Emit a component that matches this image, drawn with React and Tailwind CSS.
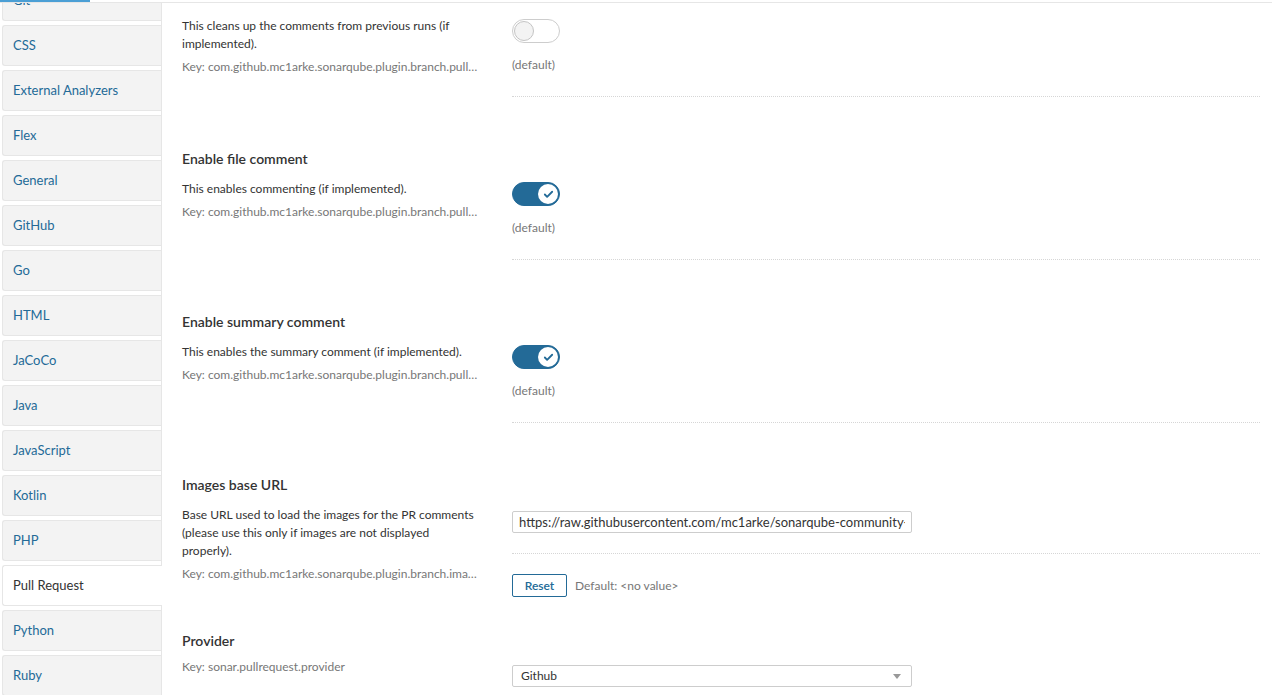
import { Check } from 'lucide-react'

const categories = [
  'Git', 'CSS', 'External Analyzers', 'Flex', 'General', 'GitHub', 'Go', 'HTML',
  'JaCoCo', 'Java', 'JavaScript', 'Kotlin', 'PHP', 'Pull Request', 'Python', 'Ruby',
]

const Toggle = ({ on }) => (
  on ? (
    <div className="w-[48px] h-[24px] rounded-full bg-[#236a97] border border-[#236a97] flex items-center justify-end pr-[1px]">
      <div className="w-[20px] h-[20px] rounded-full bg-white flex items-center justify-center">
        <Check size={11} strokeWidth={4} className="text-[#236a97]" />
      </div>
    </div>
  ) : (
    <div className="w-[48px] h-[24px] rounded-full bg-white border border-[#cdcdcd] flex items-center pl-[1px]">
      <div className="w-[20px] h-[20px] rounded-full bg-[#f3f3f3] border border-[#c4c4c4]" />
    </div>
  )
)

const Section = ({ title, description, settingKey, children, actions, keyTight, spaced }) => (
  <div className={spaced ? "pb-[34px]" : "pb-[32px]"}>
    <h3 className="text-[14px] leading-5 font-semibold text-[#333] mb-[11px]">{title}</h3>
    <div className="flex">
      <div className="w-[297px] flex-none">
        {description && <div className="text-[12px] leading-[18px] text-[#333]">{description}</div>}
        <div className={keyTight ? "text-[12px] leading-[18px] text-[#777] truncate -mt-[4px]" : "text-[12px] leading-[18px] text-[#777] truncate mt-[5px]"}>
          Key: {settingKey}
        </div>
      </div>
      <div className="ml-[33px] flex-1 pt-[2px]">
        {children}
        {actions !== undefined && (
          <div className="border-t border-dotted border-[#d6d6d6] pt-[20px]">{actions}</div>
        )}
      </div>
    </div>
  </div>
)

const ToggleSetting = ({ on }) => (
  <div className="pb-[22px]">
    <Toggle on={on} />
    <div className="mt-[13px] text-[12px] leading-[18px] text-[#777]">(default)</div>
  </div>
)

export default function App() {
  return (
    <div className="h-[695px] overflow-hidden bg-white flex relative" style={{ fontFamily: 'Lato, "Open Sans", sans-serif' }}>
      <div className="fixed top-0 left-0 right-0 h-[3px] bg-white border-b border-[#e6e6e6] z-20">
        <div className="w-[90px] h-[2px] bg-[#4b9fd5]" />
      </div>

      <div className="w-[161px] flex-none pl-[2px] -mt-[20px] flex flex-col gap-[4px]">
        {categories.map(name => (
          <div
            key={name}
            className={name === 'Pull Request'
              ? "relative z-10 -mr-px h-[41px] flex-none flex items-center pl-[10px] text-[13px] text-[#333] bg-white border border-r-0 border-[#e6e6e6] rounded-l-[3px]"
              : "h-[41px] flex-none flex items-center pl-[10px] text-[13px] text-[#236a97] bg-[#f3f3f3] border border-r-0 border-[#e6e6e6] rounded-l-[3px]"}
          >
            {name}
          </div>
        ))}
      </div>

      <div className="flex-1 border-l border-[#e6e6e6] pl-[20px] pr-[12px]">
        <div className="-mt-[14px]">
          <Section
            title="Enable deleting comments"
            description="This cleans up the comments from previous runs (if implemented)."
            settingKey="com.github.mc1arke.sonarqube.plugin.branch.pullrequest.delete.comments.enabled"
            actions={null}
          >
            <ToggleSetting on={false} />
          </Section>

          <Section
            title="Enable file comment"
            description="This enables commenting (if implemented)."
            settingKey="com.github.mc1arke.sonarqube.plugin.branch.pullrequest.file.comment.enabled"
            actions={null}
          >
            <ToggleSetting on />
          </Section>

          <Section
            title="Enable summary comment"
            description="This enables the summary comment (if implemented)."
            settingKey="com.github.mc1arke.sonarqube.plugin.branch.pullrequest.summary.comment.enabled"
            actions={null}
          >
            <ToggleSetting on />
          </Section>

          <Section
            title="Images base URL"
            description="Base URL used to load the images for the PR comments (please use this only if images are not displayed properly)."
            settingKey="com.github.mc1arke.sonarqube.plugin.branch.image-url-base"
            spaced
            actions={
              <div className="flex items-center">
                <button className="h-[23px] w-[55px] border border-[#236a97] rounded-[2px] text-[12px] font-semibold text-[#236a97] bg-white">
                  Reset
                </button>
                <span className="ml-[8px] text-[12px] text-[#777]">Default: &lt;no value&gt;</span>
              </div>
            }
          >
            <div className="pb-[20px] pt-[3px]">
              <input
                readOnly
                value="https://raw.githubusercontent.com/mc1arke/sonarqube-community-branch-plugin/master/src/main/resources/static"
                className="block w-[400px] h-[22px] border border-[#cdcdcd] rounded-[2px] px-[6px] text-[13px] text-[#333] outline-none"
                style={{ fontFamily: 'Lato, "Open Sans", sans-serif' }}
              />
            </div>
          </Section>

          <Section title="Provider" settingKey="sonar.pullrequest.provider" keyTight>
            <div className="pt-[1px]">
              <div className="w-[400px] h-[22px] border border-[#cdcdcd] rounded-[2px] pl-[8px] pr-[10px] flex items-center justify-between bg-white">
                <span className="text-[12px] text-[#333]">Github</span>
                <span className="w-0 h-0 border-l-[4px] border-r-[4px] border-t-[5px] border-l-transparent border-r-transparent border-t-[#999]" />
              </div>
            </div>
          </Section>
        </div>
      </div>
    </div>
  )
}
